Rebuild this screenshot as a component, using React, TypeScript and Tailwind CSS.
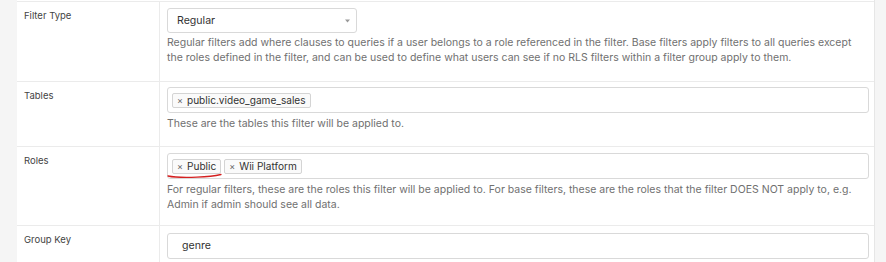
import React from "react";

const font = { fontFamily: "Inter, 'Noto Sans', sans-serif" };

const Tag = ({ label }: { label: string }) => (
  <span className="flex h-[15px] items-center gap-[4px] rounded-[2px] border border-[#d4d4d4] bg-[#fafafa] px-[4px] text-[10.1px] leading-none text-[#333]">
    <span className="text-[9px] text-[#666]">×</span>
    {label}
  </span>
);

const Row = ({
  label,
  height,
  children,
}: {
  label: string;
  height: string;
  children: React.ReactNode;
}) => (
  <div className={`flex border-b border-[#ebebeb] ${height}`}>
    <div className="w-[143px] shrink-0 border-r border-[#ebebeb] pl-[7px] pt-[8px] text-[9.5px] leading-[12px] text-[#444]">
      {label}
    </div>
    <div className="flex-1 pl-[7px] pr-[5px]">{children}</div>
  </div>
);

const Desc = ({ children }: { children: React.ReactNode }) => (
  <p className="text-[10.5px] leading-[15px] text-[#707070]">{children}</p>
);

export default function App() {
  return (
    <div className="flex h-[262px] w-[886px] overflow-hidden bg-[#f5f5f5]" style={font}>
      <div className="ml-[17px] w-[858px] border-r border-[#e6e6e6] bg-white">
        <div className="mt-[1px] border-t border-[#ebebeb]">
          <Row label="Filter Type" height="h-[80px]">
            <div className="mt-[6px] flex h-[25px] w-[190px] items-center justify-between rounded-[3px] border border-[#d9d9d9] pl-[9px] pr-[6px] text-[10.6px] text-[#333]">
              Regular
              <svg width="5" height="4" viewBox="0 0 5 4">
                <path d="M0 0.5 L5 0.5 L2.5 3.5 Z" fill="#999" />
              </svg>
            </div>
            <div className="mt-[2px]">
              <Desc>
                Regular filters add where clauses to queries if a user belongs to a role referenced in the filter. Base filters apply filters to all queries except the roles defined in the filter, and can be used to define what users can see if no RLS filters within a filter group apply to them.
              </Desc>
            </div>
          </Row>
          <Row label="Tables" height="h-[65px]">
            <div className="mt-[5px] flex h-[26px] items-center rounded-[3px] border border-[#d9d9d9] px-[4px]">
              <Tag label="public.video_game_sales" />
            </div>
            <div className="mt-[3px]">
              <Desc>These are the tables this filter will be applied to.</Desc>
            </div>
          </Row>
          <Row label="Roles" height="h-[79px]">
            <div className="relative mt-[6px] flex h-[26px] items-center gap-[3px] rounded-[3px] border border-[#d9d9d9] px-[4px]">
              <Tag label="Public" />
              <Tag label="Wii Platform" />
              <svg
                className="absolute left-[-1px] top-[19px]"
                width="56"
                height="6"
                viewBox="0 0 56 6"
              >
                <path
                  d="M1 3 Q10 5 30 4.2 Q45 3.6 54 1.5"
                  stroke="#d42020"
                  strokeWidth="1.3"
                  fill="none"
                  strokeLinecap="round"
                />
              </svg>
            </div>
            <div className="mt-[3px]">
              <Desc>
                For regular filters, these are the roles this filter will be applied to. For base filters, these are the roles that the filter DOES NOT apply to, e.g. Admin if admin should see all data.
              </Desc>
            </div>
          </Row>
          <Row label="Group Key" height="h-[60px]">
            <div className="mt-[7px] flex h-[26px] items-center rounded-[3px] border border-[#d9d9d9] pl-[14px] text-[10.6px] text-[#333]">
              genre
            </div>
          </Row>
        </div>
      </div>
    </div>
  );
}
